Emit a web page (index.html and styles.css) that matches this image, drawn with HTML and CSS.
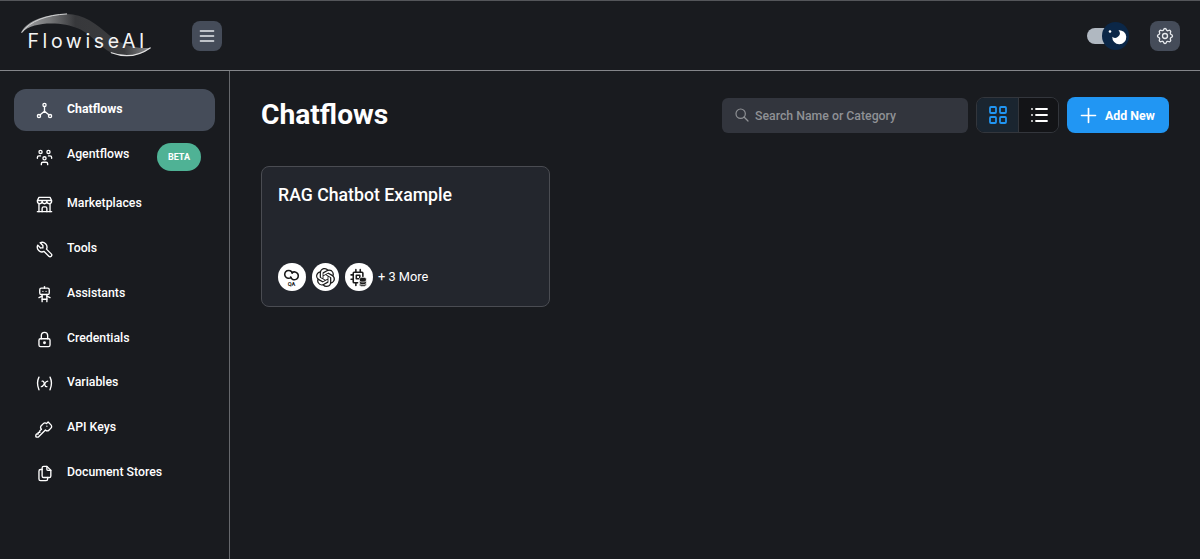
FILE: index.html
```html
<!DOCTYPE html>
<html lang="en">
<head>
<meta charset="utf-8">
<title>Flowise - Chatflows</title>
<meta name="viewport" content="width=device-width,initial-scale=1">
<link rel="stylesheet" href="styles.css">
</head>
<body>

<header class="topbar">
  <div class="logo">
    <svg class="logo-swoosh" viewBox="0 0 140 48" fill="none">
      <defs>
        <linearGradient id="band" x1="0" y1="0" x2="1" y2="0">
          <stop offset="0" stop-color="#a2a3a5"/>
          <stop offset=".22" stop-color="#77787a"/>
          <stop offset=".42" stop-color="#37383b"/>
          <stop offset=".8" stop-color="#3a3b3d"/>
          <stop offset="1" stop-color="#8b8c8e"/>
        </linearGradient>
      </defs>
      <path d="M1 21C8 8 28 2 48 2C66 2 78 12 92 24C106 35 120 38 134 37C126 44 112 47 100 44C84 40 76 24 60 17C44 10 14 9 2 21Z" fill="url(#band)"/>
      <path d="M2 21C10 9 28 3 48 2" stroke="#d6d7d8" stroke-width="1"/>
      <path d="M94 42C110 48 124 44 134 37" stroke="#e2e2e2" stroke-width="1.3"/>
    </svg>
    <span class="logo-text">FlowiseAI</span>
  </div>
  <button class="icon-btn" aria-label="Menu">
    <svg viewBox="0 0 24 24"><path d="M4 6h16M4 12h16M4 18h16"/></svg>
  </button>
  <div class="topbar-right">
    <div class="theme-switch">
      <span class="switch-track"></span>
      <span class="switch-thumb">
        <svg viewBox="0 0 28 28"><path class="moon" d="M16.5 8.200a7 7 0 1 1 -6.200 6.500a4.500 4.500 0 0 0 6.200 -6.500z"/><circle class="moon" cx="8" cy="9.500" r="1.300"/></svg>
      </span>
    </div>
    <button class="icon-btn" aria-label="Settings">
      <svg viewBox="0 0 24 24"><path d="M10.325 4.317c.426 -1.756 2.924 -1.756 3.35 0a1.724 1.724 0 0 0 2.573 1.066c1.543 -.94 3.31 .826 2.37 2.37a1.724 1.724 0 0 0 1.065 2.572c1.756 .426 1.756 2.924 0 3.35a1.724 1.724 0 0 0 -1.066 2.573c.94 1.543 -.826 3.31 -2.37 2.37a1.724 1.724 0 0 0 -2.572 1.065c-.426 1.756 -2.924 1.756 -3.35 0a1.724 1.724 0 0 0 -2.573 -1.066c-1.543 .94 -3.31 -.826 -2.37 -2.37a1.724 1.724 0 0 0 -1.065 -2.572c-1.756 -.426 -1.756 -2.924 0 -3.35a1.724 1.724 0 0 0 1.066 -2.573c-.94 -1.543 .826 -3.31 2.37 -2.37c1 .608 2.296 .07 2.572 -1.065z"/><path d="M9 12a3 3 0 1 0 6 0a3 3 0 0 0 -6 0"/></svg>
    </button>
  </div>
</header>

<div class="shell">
  <nav class="sidebar">
    <a class="nav-item active">
      <svg viewBox="0 0 24 24"><path d="M10 5a2 2 0 1 0 4 0a2 2 0 1 0 -4 0"/><path d="M3 19a2 2 0 1 0 4 0a2 2 0 1 0 -4 0"/><path d="M17 19a2 2 0 1 0 4 0a2 2 0 1 0 -4 0"/><path d="M6.500 17.500l5.500 -4.500l5.500 4.500"/><path d="M12 7v6"/></svg>
      <span>Chatflows</span>
    </a>
    <a class="nav-item nav-item-beta">
      <svg viewBox="0 0 24 24"><path d="M10 13a2 2 0 1 0 4 0a2 2 0 0 0 -4 0"/><path d="M8 21v-1a2 2 0 0 1 2 -2h4a2 2 0 0 1 2 2v1"/><path d="M15 5a2 2 0 1 0 4 0a2 2 0 0 0 -4 0"/><path d="M17 10h2a2 2 0 0 1 2 2v1"/><path d="M5 5a2 2 0 1 0 4 0a2 2 0 0 0 -4 0"/><path d="M3 13v-1a2 2 0 0 1 2 -2h2"/></svg>
      <span>Agentflows</span>
      <b class="beta">BETA</b>
    </a>
    <a class="nav-item">
      <svg viewBox="0 0 24 24"><path d="M3 21h18"/><path d="M3 7v1a3 3 0 0 0 6 0v-1m0 1a3 3 0 0 0 6 0v-1m0 1a3 3 0 0 0 6 0v-1h-18l2 -4h14l2 4"/><path d="M5 21v-10.150"/><path d="M19 21v-10.150"/><path d="M9 21v-4a2 2 0 0 1 2 -2h2a2 2 0 0 1 2 2v4"/></svg>
      <span>Marketplaces</span>
    </a>
    <a class="nav-item">
      <svg viewBox="0 0 24 24"><path d="M7 10h3v-3l-3.500 -3.500a6 6 0 0 1 8 8l6 6a2 2 0 0 1 -3 3l-6 -6a6 6 0 0 1 -8 -8l3.500 3.500"/></svg>
      <span>Tools</span>
    </a>
    <a class="nav-item">
      <svg viewBox="0 0 24 24"><path d="M6 6a2 2 0 0 1 2 -2h8a2 2 0 0 1 2 2v4a2 2 0 0 1 -2 2h-8a2 2 0 0 1 -2 -2z"/><path d="M12 2v2"/><path d="M9 12v9"/><path d="M15 12v9"/><path d="M5 16l4 -2"/><path d="M15 14l4 2"/><path d="M9 18h6"/><path d="M10 8v.010"/><path d="M14 8v.010"/></svg>
      <span>Assistants</span>
    </a>
    <a class="nav-item">
      <svg viewBox="0 0 24 24"><path d="M5 13a2 2 0 0 1 2 -2h10a2 2 0 0 1 2 2v6a2 2 0 0 1 -2 2h-10a2 2 0 0 1 -2 -2v-6z"/><path d="M11 16a1 1 0 1 0 2 0a1 1 0 0 0 -2 0"/><path d="M8 11v-4a4 4 0 1 1 8 0v4"/></svg>
      <span>Credentials</span>
    </a>
    <a class="nav-item">
      <svg viewBox="0 0 24 24"><path d="M5 4c-2.500 5 -2.500 10 0 16m14 -16c2.500 5 2.500 10 0 16m-10 -11h1c1 0 1 1 2.016 3.527c.984 2.473 .984 3.473 1.984 3.473h1"/><path d="M8 16c1.500 0 3 -2 4 -3.500s2.500 -3.500 4 -3.500"/></svg>
      <span>Variables</span>
    </a>
    <a class="nav-item">
      <svg viewBox="0 0 24 24"><path d="M16.555 3.843l3.602 3.602a2.877 2.877 0 0 1 0 4.069l-2.643 2.643a2.877 2.877 0 0 1 -4.069 0l-.301 -.301l-8.534 8.534a2 2 0 0 1 -1.239 .578l-.175 .008h-1.172a1 1 0 0 1 -.993 -.883l-.007 -.117v-1.172a2 2 0 0 1 .467 -1.284l.119 -.13l.414 -.414h2v-2h2v-2l2.144 -2.144l-.301 -.301a2.877 2.877 0 0 1 0 -4.069l2.643 -2.643a2.877 2.877 0 0 1 4.069 0z"/><path d="M15 9h.010"/></svg>
      <span>API Keys</span>
    </a>
    <a class="nav-item">
      <svg viewBox="0 0 24 24"><path d="M15 3v4a1 1 0 0 0 1 1h4"/><path d="M18 17h-7a2 2 0 0 1 -2 -2v-10a2 2 0 0 1 2 -2h4l5 5v7a2 2 0 0 1 -2 2z"/><path d="M16 17v2a2 2 0 0 1 -2 2h-7a2 2 0 0 1 -2 -2v-10a2 2 0 0 1 2 -2h2"/></svg>
      <span>Document Stores</span>
    </a>
  </nav>

  <main class="content">
    <div class="toolbar">
      <h1>Chatflows</h1>
      <label class="search">
        <svg viewBox="0 0 24 24"><path d="M3 10a7 7 0 1 0 14 0a7 7 0 1 0 -14 0"/><path d="M21 21l-6 -6"/></svg>
        <span>Search Name or Category</span>
      </label>
      <div class="view-toggle">
        <button class="view-btn selected" aria-label="Card view">
          <svg viewBox="0 0 24 24"><path d="M4 5a1 1 0 0 1 1 -1h4a1 1 0 0 1 1 1v4a1 1 0 0 1 -1 1h-4a1 1 0 0 1 -1 -1z"/><path d="M14 5a1 1 0 0 1 1 -1h4a1 1 0 0 1 1 1v4a1 1 0 0 1 -1 1h-4a1 1 0 0 1 -1 -1z"/><path d="M4 15a1 1 0 0 1 1 -1h4a1 1 0 0 1 1 1v4a1 1 0 0 1 -1 1h-4a1 1 0 0 1 -1 -1z"/><path d="M14 15a1 1 0 0 1 1 -1h4a1 1 0 0 1 1 1v4a1 1 0 0 1 -1 1h-4a1 1 0 0 1 -1 -1z"/></svg>
        </button>
        <button class="view-btn" aria-label="List view">
          <svg viewBox="0 0 24 24"><path d="M9 6h11"/><path d="M9 12h11"/><path d="M9 18h11"/><path d="M5 6v.010"/><path d="M5 12v.010"/><path d="M5 18v.010"/></svg>
        </button>
      </div>
      <button class="add-btn">
        <svg viewBox="0 0 24 24"><path d="M12 4v16"/><path d="M4 12h16"/></svg>
        <span>Add New</span>
      </button>
    </div>

    <article class="card">
      <h2>RAG Chatbot Example</h2>
      <div class="card-nodes">
        <span class="node">
          <svg viewBox="0 0 24 24"><path d="M11.500 12A4.500 4.500 0 1 1 13 7"/><path d="M12.500 6.500A4.500 4.500 0 1 1 11 11.500"/><text x="12" y="21.500">QA</text></svg>
        </span>
        <span class="node">
          <svg class="knot" viewBox="0 0 24 24"><path d="M22.2819 9.8211a5.9847 5.9847 0 0 0-.5157-4.9108 6.0462 6.0462 0 0 0-6.5098-2.9A6.0651 6.0651 0 0 0 4.9807 4.1818a5.9847 5.9847 0 0 0-3.9977 2.9 6.0462 6.0462 0 0 0 .7427 7.0966 5.98 5.98 0 0 0 .511 4.9107 6.051 6.051 0 0 0 6.5146 2.9001A5.9847 5.9847 0 0 0 13.2599 24a6.0557 6.0557 0 0 0 5.7718-4.2058 5.9894 5.9894 0 0 0 3.9977-2.9001 6.0557 6.0557 0 0 0-.7475-7.0729zm-9.022 12.6081a4.4755 4.4755 0 0 1-2.8764-1.0408l.1419-.0804 4.7783-2.7582a.7948.7948 0 0 0 .3927-.6813v-6.7369l2.02 1.1686a.071.071 0 0 1 .038.052v5.5826a4.504 4.504 0 0 1-4.4945 4.4944zm-9.6607-4.1254a4.4708 4.4708 0 0 1-.5346-3.0137l.142.0852 4.783 2.7582a.7712.7712 0 0 0 .7806 0l5.8428-3.3685v2.3324a.0804.0804 0 0 1-.0332.0615L9.74 19.9502a4.4992 4.4992 0 0 1-6.1408-1.6464zM2.3408 7.8956a4.485 4.485 0 0 1 2.3655-1.9728V11.6a.7664.7664 0 0 0 .3879.6765l5.8144 3.3543-2.0201 1.1685a.0757.0757 0 0 1-.071 0l-4.8303-2.7865A4.504 4.504 0 0 1 2.3408 7.872zm16.5963 3.8558L13.1038 8.364 15.1192 7.2a.0757.0757 0 0 1 .071 0l4.8303 2.7913a4.4944 4.4944 0 0 1-.6765 8.1042v-5.6772a.79.79 0 0 0-.407-.667zm2.0107-3.0231l-.142-.0852-4.7735-2.7818a.7759.7759 0 0 0-.7854 0L9.409 9.2297V6.8974a.0662.0662 0 0 1 .0284-.0615l4.8303-2.7866a4.4992 4.4992 0 0 1 6.6802 4.66zM8.3065 12.863l-2.02-1.1638a.0804.0804 0 0 1-.038-.0567V6.0742a4.4992 4.4992 0 0 1 7.3757-3.4537l-.142.0805L8.704 5.459a.7948.7948 0 0 0-.3927.6813zm1.0976-2.3654l2.602-1.4998 2.6069 1.4998v2.9994l-2.5974 1.4997-2.6067-1.4997Z"/></svg>
        </span>
        <span class="node">
          <svg viewBox="0 0 24 24"><path d="M11 18h-4a1 1 0 0 1 -1 -1v-10a1 1 0 0 1 1 -1h9a1 1 0 0 1 1 1v4"/><path d="M9.500 9.500h4v4h-4z"/><path d="M3.500 9h2.500M3.500 14h2.500M9 3v3M14 3v3M9 18v3"/><path class="solid" d="M13 13.500c0 -1 1.800 -1.700 4 -1.700s4 .7 4 1.700v7c0 1 -1.800 1.700 -4 1.700s-4 -.7 -4 -1.700z"/><path class="solid-line" d="M13 15.500c0 1 1.800 1.700 4 1.700s4 -.7 4 -1.700M13 18.500c0 1 1.800 1.700 4 1.700s4 -.7 4 -1.700"/></svg>
        </span>
        <span class="more">+ 3 More</span>
      </div>
    </article>
  </main>
</div>

</body>
</html>
```

FILE: styles.css
```css
:root{--bg:#191b1f;--card:#23262d;--text:#fff;--slate:#454c59;--blue:#2196f3}
*{box-sizing:border-box}
body{margin:0;height:559px;overflow:hidden;background:var(--bg);color:var(--text);
     font-family:Roboto,"Liberation Sans",sans-serif;display:flex;flex-direction:column}
svg{fill:none;stroke:currentColor;stroke-width:1.5;stroke-linecap:round;stroke-linejoin:round;display:block}
button{font:inherit;color:inherit;border:none;padding:0;cursor:pointer}

/* top bar */
.topbar{height:71px;flex:none;display:flex;align-items:center;padding:1px 20px 0;
        border-top:1px solid #54565a;border-bottom:1px solid #84868a}
.logo{position:relative;width:136px;height:48px;margin-right:36px}
.logo-swoosh{position:absolute;left:0;top:0;width:136px;height:46.6px;stroke:none}
.logo-text{position:absolute;left:7.5px;top:16px;font:400 19.5px/26px Inter,sans-serif;letter-spacing:3.6px;color:#f4f4f4}
.icon-btn{width:30px;height:30px;border-radius:8px;background:var(--slate);display:flex;align-items:center;justify-content:center;color:#e6e9ed}
.icon-btn svg{width:20px;height:20px;stroke-width:1.6}
.topbar-right{margin-left:auto;display:flex;align-items:center;gap:21px}
.theme-switch{position:relative;width:42px;height:28px;display:flex;align-items:center}
.switch-track{width:30px;height:16px;border-radius:8px;background:#b0b8c1}
.switch-thumb{position:absolute;right:0;top:0;width:27px;height:28px;border-radius:50%;background:#0b2747;display:flex;align-items:center;justify-content:center}
.switch-thumb svg{width:28px;height:28px;stroke:none;flex:none}
.moon{fill:#fff}

/* sidebar */
.shell{flex:1;display:flex;min-height:0}
.sidebar{width:230px;flex:none;border-right:1px solid #66686c;padding:18px 14px 0}
.nav-item{position:relative;display:flex;align-items:center;width:201px;height:44.75px;padding-left:20.5px;border-radius:12px;font-size:12.3px;font-weight:500;color:#fff}
.nav-item svg{width:19px;height:19px;flex:none;margin-right:13.5px;stroke-width:1.7}
.nav-item span{padding-bottom:3px}
.nav-item.active{height:42px;background:var(--slate);font-weight:700;margin-bottom:1px}
.nav-item-beta{height:50.5px}
.nav-item-beta span{padding-bottom:7px}
.beta{position:absolute;right:14px;top:11px;width:44px;height:28px;border-radius:14px;background:#4fb295;font-size:9px;font-weight:700;display:flex;align-items:center;justify-content:center}

/* main */
.content{flex:1;padding:26px 31px 0}
.toolbar{display:flex;align-items:center;height:36px;margin-bottom:33px}
h1{margin:0 auto 0 0;font-size:28.2px;font-weight:700;line-height:36px}
.search{width:246px;height:35px;border-radius:6px;background:#32353d;display:flex;align-items:center;padding-left:12px;gap:5px;color:#8f9195;font-size:12.3px;font-weight:500}
.search svg{width:16px;height:16px;stroke-width:1.8}
.search span{padding-top:1px}
.view-toggle{display:flex;height:36px;margin-left:8px;border:1px solid #33363c;border-radius:8px;overflow:hidden}
.view-btn{width:41px;background:transparent;display:flex;align-items:center;justify-content:center;color:#fff}
.view-btn+.view-btn{border-left:1px solid #33363c;width:40px;background:#131417}
.view-btn.selected{background:#1a2530;color:var(--blue)}
.view-btn svg{width:24px;height:24px;stroke-width:1.8}
.add-btn{margin-left:8px;width:102px;height:36px;border-radius:8px;background:var(--blue);display:flex;align-items:center;gap:6.5px;padding-left:10.5px;font-size:12.4px;font-weight:700}
.add-btn svg{width:21px;height:21px;stroke-width:1.9}

/* card */
.card{width:289px;height:141px;border:1px solid #4a4c52;border-radius:8px;background:var(--card);padding:16px 16px 15px;display:flex;flex-direction:column;justify-content:space-between}
h2{margin:0;font-size:17.7px;font-weight:500;line-height:24px}
.card-nodes{display:flex;align-items:center;gap:6px}
.node{width:27.5px;height:28px;border-radius:50%;background:#fff;color:#1b1b1b;display:flex;align-items:center;justify-content:center}
.node svg{width:21px;height:21px;stroke-width:1.8}
.node svg.knot{width:19px;height:19px;fill:#1b1b1b;stroke:none}
.node text{font:700 6.5px Roboto,sans-serif;text-anchor:middle;fill:#1b1b1b;stroke:none}
.solid{fill:#1b1b1b;stroke:#fff;stroke-width:.8}
.solid-line{stroke:#fff;stroke-width:.8}
.more{font-size:12.8px;padding-bottom:1px;margin-left:-.5px}
```
